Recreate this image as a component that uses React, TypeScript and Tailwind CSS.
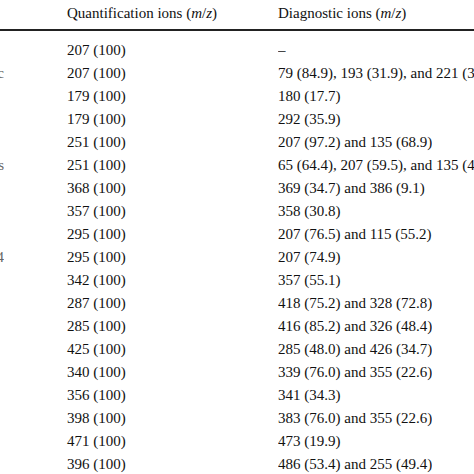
import React from "react";

interface IRow {
  name: string;
  quant: string;
  diag: string;
}

const rows: IRow[] = [
  { name: "", quant: "207 (100)", diag: "–" },
  { name: "c", quant: "207 (100)", diag: "79 (84.9), 193 (31.9), and 221 (36.2)" },
  { name: "", quant: "179 (100)", diag: "180 (17.7)" },
  { name: "", quant: "179 (100)", diag: "292 (35.9)" },
  { name: "", quant: "251 (100)", diag: "207 (97.2) and 135 (68.9)" },
  { name: "s", quant: "251 (100)", diag: "65 (64.4), 207 (59.5), and 135 (46.1)" },
  { name: "", quant: "368 (100)", diag: "369 (34.7) and 386 (9.1)" },
  { name: "", quant: "357 (100)", diag: "358 (30.8)" },
  { name: "", quant: "295 (100)", diag: "207 (76.5) and 115 (55.2)" },
  { name: "4", quant: "295 (100)", diag: "207 (74.9)" },
  { name: "", quant: "342 (100)", diag: "357 (55.1)" },
  { name: "", quant: "287 (100)", diag: "418 (75.2) and 328 (72.8)" },
  { name: "", quant: "285 (100)", diag: "416 (85.2) and 326 (48.4)" },
  { name: "", quant: "425 (100)", diag: "285 (48.0) and 426 (34.7)" },
  { name: "", quant: "340 (100)", diag: "339 (76.0) and 355 (22.6)" },
  { name: "", quant: "356 (100)", diag: "341 (34.3)" },
  { name: "", quant: "398 (100)", diag: "383 (76.0) and 355 (22.6)" },
  { name: "", quant: "471 (100)", diag: "473 (19.9)" },
  { name: "", quant: "396 (100)", diag: "486 (53.4) and 255 (49.4)" },
];

export default function App() {
  return (
    <div className="h-[474px] w-[474px] overflow-hidden bg-white font-['Liberation_Serif',serif] text-[15px] text-[#111]">
      {/* header */}
      <div className="flex h-[29px] items-center whitespace-nowrap pb-[2px]">
        <div className="w-[67px] shrink-0" />
        <div className="w-[211px] shrink-0">
          Quantification ions (<i>m</i>/<i>z</i>)
        </div>
        <div>
          Diagnostic ions (<i>m</i>/<i>z</i>)
        </div>
      </div>
      <div className="h-[2px] w-full bg-[#222]" />

      {/* body */}
      <div className="pt-[8px]">
        {rows.map((row, i) => (
          <div key={i} className="flex h-[23px] items-center whitespace-nowrap">
            <div className="flex w-[4px] shrink-0 justify-end overflow-hidden text-[#666]">
              {row.name && <span>{row.name}</span>}
            </div>
            <div className="w-[63px] shrink-0" />
            <div className="w-[211px] shrink-0">{row.quant}</div>
            <div className="overflow-hidden">{row.diag}</div>
          </div>
        ))}
      </div>
    </div>
  );
}
